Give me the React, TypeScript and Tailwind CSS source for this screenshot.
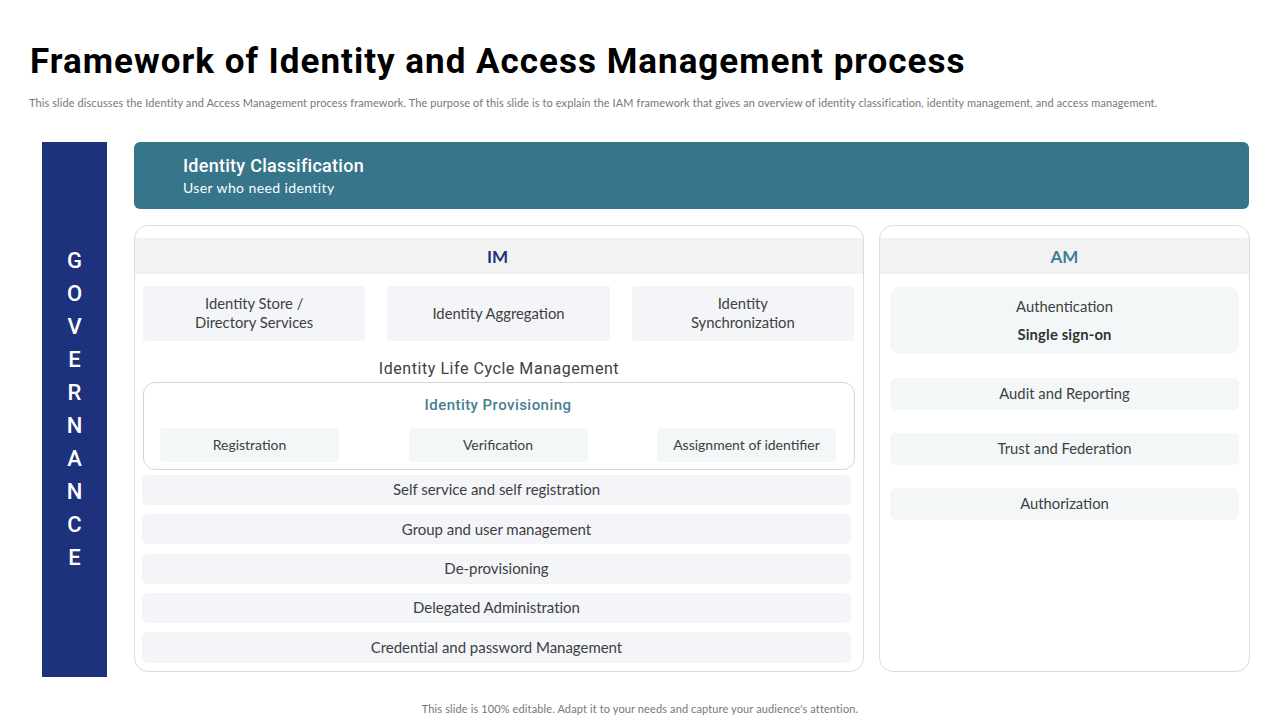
const din = "font-['Roboto','Liberation_Sans',sans-serif]";
const body = "font-['Lato','Open_Sans',sans-serif]";

const topCards = [["Identity Store /", "Directory Services"], ["Identity Aggregation"], ["Identity", "Synchronization"]];
const provisioning = ["Registration", "Verification", "Assignment of identifier"];
const lifeCycle = [
  "Self service and self registration",
  "Group and user management",
  "De-provisioning",
  "Delegated Administration",
];
const amItems = ["Audit and Reporting", "Trust and Federation", "Authorization"];

function PanelHeader({ label, color, className }: { label: string; color: string; className?: string }) {
  return (
    <div className={`mt-3 flex h-9 items-center justify-center bg-[#f2f2f2] pt-[1px] text-[17px] font-bold ${color} ${className ?? ""}`}>
      {label}
    </div>
  );
}

export default function App() {
  return (
    <div className={`flex h-[720px] w-[1280px] flex-col overflow-hidden bg-white ${body}`}>
      <h1 className={`ml-[30px] mt-[41px] h-[42px] text-[35px] font-bold leading-[42px] tracking-[1px] text-black ${din}`}>
        Framework of Identity and Access Management process
      </h1>
      <p className="ml-[29px] mt-[13px] h-[14px] whitespace-nowrap text-[11px] leading-[14px] tracking-[0.09px] text-[#777]">
        This slide discusses the Identity and Access Management process framework. The purpose of this slide is to explain the IAM framework that gives an overview of identity classification, identity management, and access management.
      </p>

      <div className="ml-[42px] mt-[32px] flex h-[535px] gap-[27px]">
        {/* governance */}
        <div className={`flex h-full w-[65px] shrink-0 flex-col items-center justify-center gap-[9px] bg-[#1d317c] text-[22px] font-medium leading-[24px] text-white ${din}`}>
          {"GOVERNANCE".split("").map((ch, i) => (
            <span key={i}>{ch}</span>
          ))}
        </div>

        <div className="flex w-[1115px] flex-col">
          <div className="flex h-[67px] flex-col justify-center rounded-[6px] bg-[#36758a] pl-[49px] pt-[1px] text-white">
            <div className={`text-[18px] font-medium leading-[24px] tracking-[0.27px] ${din}`}>Identity Classification</div>
            <div className="text-[14px] leading-[20px] tracking-[0.4px]">User who need identity</div>
          </div>

          <div className="mt-4 flex h-[447px] gap-[15px]">
            {/* IM */}
            <div className="h-full w-[730px] shrink-0 rounded-[14px] border border-[#dcdcdc]">
              <PanelHeader label="IM" color="text-[#1d317c]" className="pr-[3px]" />
              <div className="ml-2 mt-3 flex w-[711px] gap-[22px]">
                {topCards.map((lines, i) => (
                  <div key={i} className="flex h-[55px] flex-1 flex-col items-center justify-center rounded-[2px] bg-[#f3f5f9] pb-[1px] text-[14.8px] leading-[19px] text-[#404040]">
                    {lines.map((l) => (
                      <span key={l}>{l}</span>
                    ))}
                  </div>
                ))}
              </div>
              <div className={`mt-[18px] h-[20px] text-center text-[16px] leading-[20px] tracking-[0.55px] text-[#404040] ${din}`}>
                Identity Life Cycle Management
              </div>
              <div className="ml-2 mt-[3px] h-[88px] w-[712px] rounded-[12px] border border-[#d6d6d6] pl-4 pr-[18px]">
                <div className={`mt-[12px] h-[20px] text-center text-[15px] font-medium leading-[20px] tracking-[0.45px] text-[#45808f] ${din}`}>
                  Identity Provisioning
                </div>
                <div className="mt-[13px] flex justify-between">
                  {provisioning.map((p) => (
                    <div key={p} className="flex h-[34px] w-[179px] items-center justify-center rounded-[4px] bg-[#f3f7f8] pb-[2px] text-[14px] text-[#404040]">
                      {p}
                    </div>
                  ))}
                </div>
              </div>
              <div className="ml-[7px] mt-[5px] flex w-[709px] flex-col gap-[9.3px]">
                {lifeCycle.map((r) => (
                  <div key={r} className="flex h-[30px] items-center justify-center rounded-[5px] bg-[#f3f5f9] pb-[1px] text-[15px] tracking-[-0.03px] text-[#404040]">
                    {r}
                  </div>
                ))}
                <div className="flex h-[31px] items-center justify-center rounded-[5px] bg-[#f3f5f9] text-[15px] tracking-[-0.03px] text-[#404040]">
                  Credential and password Management
                </div>
              </div>
            </div>

            {/* AM */}
            <div className="h-full w-[371px] shrink-0 rounded-[14px] border border-[#dcdcdc]">
              <PanelHeader label="AM" color="text-[#3f7d92]" />
              <div className="mx-[10px] mt-[13px] flex flex-col">
                <div className="flex h-[67px] flex-col items-center justify-center gap-[9px] rounded-[10px] bg-[#f3f7f8] text-[14.8px] leading-[19px] text-[#404040]">
                  <span>Authentication</span>
                  <span className="font-bold tracking-[0.15px] text-[#333]">Single sign-on</span>
                </div>
                <div className="mt-[24px] flex flex-col gap-[23px]">
                  {amItems.map((a) => (
                    <div key={a} className="flex h-[32px] items-center justify-center rounded-[6px] bg-[#f3f7f8] pb-[1px] text-[14.8px] text-[#404040]">
                      {a}
                    </div>
                  ))}
                </div>
              </div>
            </div>
          </div>
        </div>
      </div>

      <p className="mt-[25px] text-center text-[11px] leading-[14px] tracking-[0.12px] text-[#777]">
        This slide is 100% editable. Adapt it to your needs and capture your audience's attention.
      </p>
    </div>
  );
}
